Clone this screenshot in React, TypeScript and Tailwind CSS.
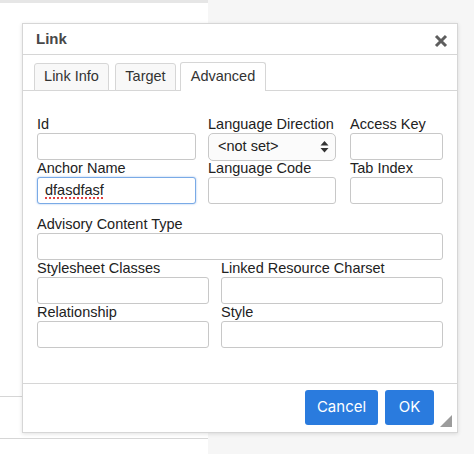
import React from "react";

const font = { fontFamily: '"Liberation Sans", Arial, sans-serif' };

function Field({ label, className = "", value, focused = false }: { label: string; className?: string; value?: string; focused?: boolean }) {
  return (
    <div className={"flex flex-col " + className}>
      <label className="h-[17px] text-[14.5px] leading-[17px] text-[#222] whitespace-nowrap">{label}</label>
      <div
        className={
          "h-[27px] rounded-[3px] border bg-white px-[7px] flex items-center text-[14.5px] text-[#222] " +
          (focused ? "border-[#7aaae6] shadow-[0_0_2px_rgba(80,140,220,0.6)]" : "border-[#c8c8c8]")
        }
      >
        {value ? (
          <span className="underline decoration-dotted decoration-[#e04040] decoration-[1.5px] underline-offset-[3px]">{value}</span>
        ) : null}
      </div>
    </div>
  );
}

export default function App() {
  return (
    <div className="relative w-[474px] h-[454px] flex overflow-hidden" style={font}>
      <div className="w-[208px] h-full bg-white flex flex-col">
        <div className="h-[3px] bg-[#e6e6e6]" />
        <div className="h-[393px]" />
        <div className="h-[42px] border-t border-[#d6d6d6]" />
        <div className="flex-1 border-t border-[#d6d6d6]" />
      </div>
      <div className="flex-1 h-full bg-[#f6f6f6]" />

      {/* dialog */}
      <div className="absolute left-[22px] top-[23px] w-[436px] h-[410px] bg-white border border-[#d6d6d6] shadow-[0_1px_4px_rgba(0,0,0,0.12)] flex flex-col">
        <div className="h-[31px] shrink-0 border-b border-[#d6d6d6] flex items-center justify-between pl-[13px] pr-[9px]">
          <span className="text-[15px] font-bold text-[#484848]">Link</span>
          <svg width="14" height="14" viewBox="0 0 14 14" className="mt-[3px]">
            <path d="M2 2 L12 12 M12 2 L2 12" stroke="#5e5e5e" strokeWidth="3" strokeLinecap="butt" />
          </svg>
        </div>
        <div className="h-[36px] shrink-0 flex items-end pl-[11px] border-b border-[#d6d6d6]">
          <div className="w-[75px] h-[28px] -mb-px mr-[6px] rounded-t-[3px] border border-[#d6d6d6] bg-[#f8f8f8] flex items-center justify-center text-[14.5px] text-[#333]">Link Info</div>
          <div className="w-[61px] h-[28px] -mb-px mr-[4px] rounded-t-[3px] border border-[#d6d6d6] bg-[#f8f8f8] flex items-center justify-center text-[14.5px] text-[#333]">Target</div>
          <div className="w-[86px] h-[29px] -mb-px rounded-t-[3px] border border-b-0 border-[#d6d6d6] bg-white flex items-center justify-center text-[14.5px] text-[#333] pb-[1px]">Advanced</div>
        </div>
        <div className="h-[293px] shrink-0 border-b border-[#d6d6d6] pl-[14px] pt-[25px] flex flex-col">
          <div className="flex">
            <div className="flex flex-col w-[159px] mr-[12px]">
              <Field label="Id" />
              <Field label="Anchor Name" value="dfasdfasf" focused />
            </div>
            <div className="flex flex-col w-[128px] mr-[14px]">
              <div className="flex flex-col">
                <label className="h-[17px] text-[14.5px] leading-[17px] text-[#222] whitespace-nowrap">Language Direction</label>
                <div className="h-[28px] rounded-[5px] border border-[#c8c8c8] bg-[#fbfbfb] pl-[9px] pr-[6px] flex items-center justify-between text-[14.5px] text-[#222]">
                  <span>&lt;not set&gt;</span>
                  <svg width="9" height="14" viewBox="0 0 9 14">
                    <path d="M4.5 1 L8.5 5.5 L0.5 5.5 Z M0.5 8 L8.5 8 L4.5 12.5 Z" fill="#333" />
                  </svg>
                </div>
              </div>
              <div className="-mt-px">
                <Field label="Language Code" />
              </div>
            </div>
            <div className="flex flex-col w-[93px]">
              <Field label="Access Key" />
              <Field label="Tab Index" />
            </div>
          </div>
          <Field label="Advisory Content Type" className="w-[406px] mt-[12px]" />
          <div className="flex">
            <Field label="Stylesheet Classes" className="w-[172px] mr-[12px]" />
            <Field label="Linked Resource Charset" className="w-[222px]" />
          </div>
          <div className="flex">
            <Field label="Relationship" className="w-[172px] mr-[12px]" />
            <Field label="Style" className="w-[222px]" />
          </div>
        </div>
        <div className="flex-1 flex items-start justify-end pt-[6px] pr-[23px] relative">
          <button className="w-[73px] h-[35px] rounded-[3px] bg-[#2a7bde] text-white text-[15px] mr-[7px]" style={{ fontFamily: 'Inter, "Liberation Sans", sans-serif' }}>Cancel</button>
          <button className="w-[49px] h-[35px] rounded-[3px] bg-[#2a7bde] text-white text-[15px]" style={{ fontFamily: 'Inter, "Liberation Sans", sans-serif' }}>OK</button>
          <svg width="12" height="12" viewBox="0 0 12 12" className="absolute right-[5px] bottom-[5px]">
            <path d="M12 0 L12 12 L0 12 Z" fill="#9c9c9c" />
          </svg>
        </div>
      </div>
    </div>
  );
}
